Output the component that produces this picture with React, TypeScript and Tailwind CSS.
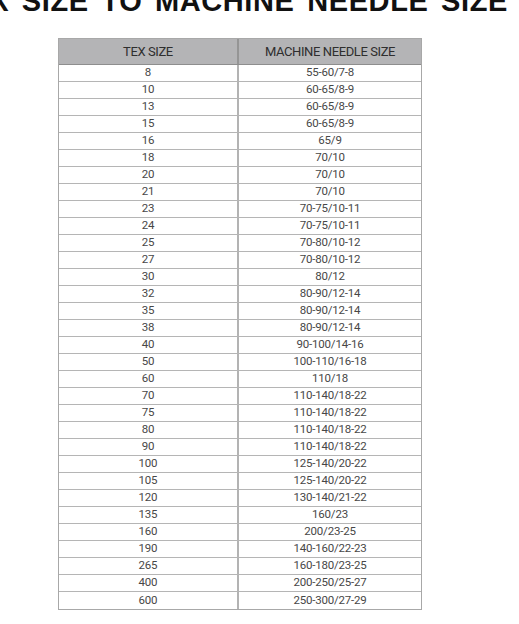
import React from "react";

const rows: [string, string][] = [
  ["8", "55-60/7-8"],
  ["10", "60-65/8-9"],
  ["13", "60-65/8-9"],
  ["15", "60-65/8-9"],
  ["16", "65/9"],
  ["18", "70/10"],
  ["20", "70/10"],
  ["21", "70/10"],
  ["23", "70-75/10-11"],
  ["24", "70-75/10-11"],
  ["25", "70-80/10-12"],
  ["27", "70-80/10-12"],
  ["30", "80/12"],
  ["32", "80-90/12-14"],
  ["35", "80-90/12-14"],
  ["38", "80-90/12-14"],
  ["40", "90-100/14-16"],
  ["50", "100-110/16-18"],
  ["60", "110/18"],
  ["70", "110-140/18-22"],
  ["75", "110-140/18-22"],
  ["80", "110-140/18-22"],
  ["90", "110-140/18-22"],
  ["100", "125-140/20-22"],
  ["105", "125-140/20-22"],
  ["120", "130-140/21-22"],
  ["135", "160/23"],
  ["160", "200/23-25"],
  ["190", "140-160/22-23"],
  ["265", "160-180/23-25"],
  ["400", "200-250/25-27"],
  ["600", "250-300/27-29"],
];

const App: React.FC = () => {
  return (
    <main className="w-[519px] h-[624px] overflow-hidden bg-white">
      {/* chart title, top half cut off by the page edge */}
      <h1 className="-mt-[13px] -ml-[49px] w-[720px] whitespace-nowrap text-left text-[29px] leading-[29px] font-bold tracking-[0.6px] [word-spacing:4px] text-[#111] font-['Liberation_Sans',Arial,sans-serif]">
        TEX SIZE TO MACHINE NEEDLE SIZE
      </h1>

      <div className="ml-[58px] mt-[22px] w-[364px] border border-[#a8a8a8] font-['Roboto',sans-serif]">
        <div className="flex h-[26px] bg-[#b4b4b6] border-b border-[#8e8e8e] text-[13px] tracking-[-0.4px] text-[#2e2e2e]">
          <div className="w-[180px] flex items-center justify-center border-r-2 border-[#959595]">TEX SIZE</div>
          <div className="flex-1 flex items-center justify-center">MACHINE NEEDLE SIZE</div>
        </div>
        {rows.map(([tex, needle], i) => (
          <div
            key={tex}
            className={`flex h-[17px] text-[11.5px] tracking-[-0.2px] leading-none text-[#474747] ${i < rows.length - 1 ? "border-b border-[#b5b5b5]" : ""}`}
          >
            <div className="w-[180px] flex items-center justify-center border-r-2 border-[#b3b3b3]">{tex}</div>
            <div className="flex-1 flex items-center justify-center">{needle}</div>
          </div>
        ))}
      </div>
    </main>
  );
};

export default App;
